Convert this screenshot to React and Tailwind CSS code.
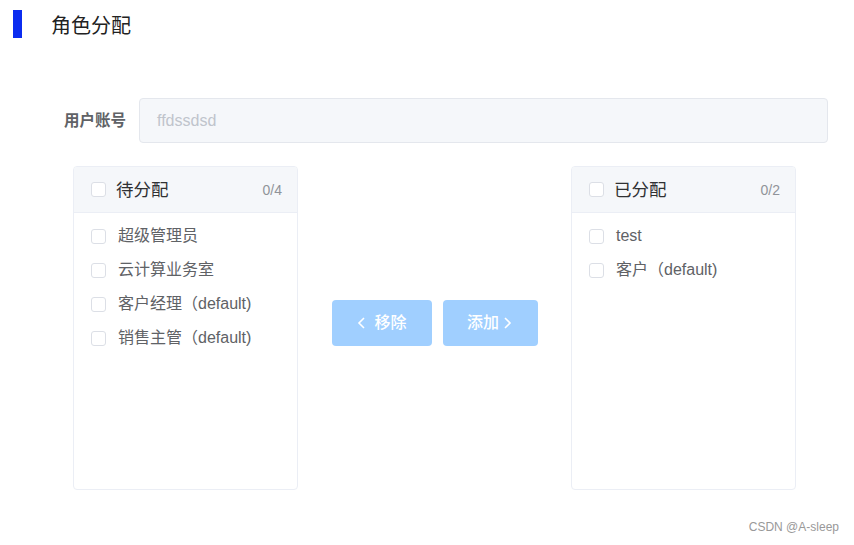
import React from "react";

const FONT = { fontFamily: '"Liberation Sans", "Noto Sans CJK SC", sans-serif' };

function Box() {
  return <span className="block w-[15px] h-[15px] shrink-0 rounded-[3px] border border-[#dcdfe6] bg-white" />;
}

function Panel({ title, count, items }) {
  return (
    <div className="w-[225px] h-[324px] rounded-[4px] border border-[#ebeef5] bg-white overflow-hidden">
      <div className="h-[46px] flex items-center pl-[17px] pr-[15px] bg-[#f5f7fa] border-b border-[#ebeef5]">
        <Box />
        <span className="ml-[10px] mt-[2px] text-[17.5px] text-[#303133] leading-none">{title}</span>
        <span className="ml-auto mt-[1px] text-[14px] text-[#909399]">{count}</span>
      </div>
      <div className="pt-[6px]">
        {items.map((t) => (
          <div key={t} className="h-[34px] flex items-center pl-[17px]">
            <Box />
            <span className="ml-[12px] text-[16px] text-[#606266] leading-none">{t}</span>
          </div>
        ))}
      </div>
    </div>
  );
}

export default function App() {
  return (
    <div className="relative w-[854px] h-[545px] bg-white" style={FONT}>
      <div className="flex items-center pt-[10px] pl-[13px]">
        <div className="w-[9px] h-[28px] bg-[#0b2cf0]" />
        <span className="ml-[29px] mt-[4px] text-[20px] text-[#222] leading-none">角色分配</span>
      </div>

      <div className="flex items-center mt-[60px]">
        <div className="w-[126px] text-right text-[15.5px] font-bold text-[#606266]">用户账号</div>
        <div className="ml-[13px] w-[689px] h-[45px] flex items-center pl-[17px] rounded-[4px] border border-[#e4e7ed] bg-[#f5f7fa] text-[16px] text-[#c0c4cc]">
          ffdssdsd
        </div>
      </div>

      <div className="flex mt-[23px] pl-[73px]">
        <Panel title="待分配" count="0/4" items={["超级管理员", "云计算业务室", "客户经理（default)", "销售主管（default)"]} />
        <div className="w-[273px] flex items-center justify-center gap-[11px] pb-[11px]">
          <button className="w-[100px] h-[46px] rounded-[4px] bg-[#a0cfff] text-white text-[16px] font-medium flex items-center justify-center">
            <svg width="12" height="14" viewBox="0 0 12 14" fill="none" stroke="white" strokeWidth="1.6">
              <path d="M8 2 L3 7 L8 12" />
            </svg>
            <span className="ml-[6px]">移除</span>
          </button>
          <button className="w-[95px] h-[46px] rounded-[4px] bg-[#a0cfff] text-white text-[16px] font-medium flex items-center justify-center">
            <span className="mr-[2px]">添加</span>
            <svg width="12" height="14" viewBox="0 0 12 14" fill="none" stroke="white" strokeWidth="1.6">
              <path d="M4 2 L9 7 L4 12" />
            </svg>
          </button>
        </div>
        <Panel title="已分配" count="0/2" items={["test", "客户（default)"]} />
      </div>

      <div className="absolute right-[15px] bottom-[9px] text-[12px] text-[#999]">CSDN @A-sleep</div>
    </div>
  );
}
